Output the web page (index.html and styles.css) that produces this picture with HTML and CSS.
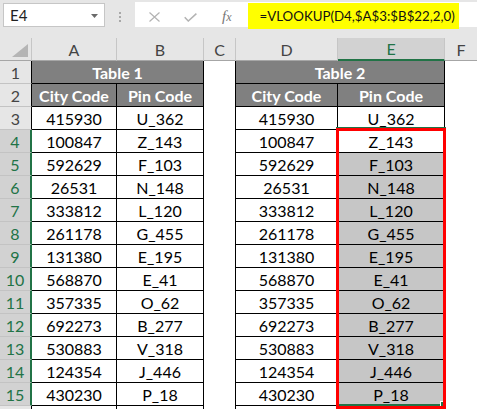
FILE: index.html
```html
<!DOCTYPE html>
<html>
<head>
<meta charset="utf-8">
<link rel="stylesheet" href="styles.css">
</head>
<body>
<div class="app">
  <div class="toolbar">
    <div class="namebox"><span class="name">E4</span><svg class="dd" width="7" height="4" viewBox="0 0 7 4"><polygon points="0,0 7,0 3.5,4" fill="#6a6a6a"/></svg></div>
    <div class="grip"><i></i><i></i><i></i></div>
    <div class="fbox">
      <svg class="ico cancel" width="11" height="10" viewBox="0 0 11 10"><path d="M0.5 0.5 L10.5 9.5 M10.5 0.5 L0.5 9.5" stroke="#b3b3b3" stroke-width="1.2" fill="none"/></svg>
      <svg class="ico enter" width="13" height="9" viewBox="0 0 13 9"><path d="M0.7 4.2 L4.3 8 L12.4 0.6" stroke="#b3b3b3" stroke-width="1.5" fill="none"/></svg>
      <span class="fx"><i>f</i><i class="sx">x</i></span>
      <div class="formula">=VLOOKUP(D4,$A$3:$B$22,2,0)</div>
    </div>
  </div>
  <div class="sheet">
    <div class="ch corner"><svg width="16" height="13" viewBox="0 0 16 13"><polygon points="16,0 16,13 0,13" fill="#b5b5b5"/></svg></div>
    <div class="ch">A</div><div class="ch">B</div><div class="ch">C</div><div class="ch">D</div><div class="ch on">E</div><div class="ch last">F</div>

    <div class="rh">1</div><div class="th span">Table 1</div><div class="gap"></div><div class="th span">Table 2</div><div class="f"></div>
    <div class="rh">2</div><div class="th">City Code</div><div class="th">Pin Code</div><div class="gap"></div><div class="th">City Code</div><div class="th">Pin Code</div><div class="f"></div>
    <div class="rh">3</div><div class="c">415930</div><div class="c">U_362</div><div class="gap"></div><div class="c">415930</div><div class="c">U_362</div><div class="f"></div>
    <div class="rh on">4</div><div class="c">100847</div><div class="c">Z_143</div><div class="gap"></div><div class="c">100847</div><div class="c">Z_143</div><div class="f"></div>
    <div class="rh on">5</div><div class="c">592629</div><div class="c">F_103</div><div class="gap"></div><div class="c">592629</div><div class="c s">F_103</div><div class="f"></div>
    <div class="rh on">6</div><div class="c">26531</div><div class="c">N_148</div><div class="gap"></div><div class="c">26531</div><div class="c s">N_148</div><div class="f"></div>
    <div class="rh on">7</div><div class="c">333812</div><div class="c">L_120</div><div class="gap"></div><div class="c">333812</div><div class="c s">L_120</div><div class="f"></div>
    <div class="rh on">8</div><div class="c">261178</div><div class="c">G_455</div><div class="gap"></div><div class="c">261178</div><div class="c s">G_455</div><div class="f"></div>
    <div class="rh on">9</div><div class="c">131380</div><div class="c">E_195</div><div class="gap"></div><div class="c">131380</div><div class="c s">E_195</div><div class="f"></div>
    <div class="rh on">10</div><div class="c">568870</div><div class="c">E_41</div><div class="gap"></div><div class="c">568870</div><div class="c s">E_41</div><div class="f"></div>
    <div class="rh on">11</div><div class="c">357335</div><div class="c">O_62</div><div class="gap"></div><div class="c">357335</div><div class="c s">O_62</div><div class="f"></div>
    <div class="rh on">12</div><div class="c">692273</div><div class="c">B_277</div><div class="gap"></div><div class="c">692273</div><div class="c s">B_277</div><div class="f"></div>
    <div class="rh on">13</div><div class="c">530883</div><div class="c">V_318</div><div class="gap"></div><div class="c">530883</div><div class="c s">V_318</div><div class="f"></div>
    <div class="rh on">14</div><div class="c">124354</div><div class="c">J_446</div><div class="gap"></div><div class="c">124354</div><div class="c s">J_446</div><div class="f"></div>
    <div class="rh on">15</div><div class="c">430230</div><div class="c">P_18</div><div class="gap"></div><div class="c">430230</div><div class="c s">P_18</div><div class="f"></div>
    <div class="rh"></div><div class="c"></div><div class="c"></div><div class="gap"></div><div class="c"></div><div class="c"></div><div class="f"></div>
  </div>
  <div class="selection"></div>
  <div class="handle"></div>
  <div class="mark"></div>
</div>
</body>
</html>
```
FILE: styles.css
```css
html, body {
  margin: 0;
  padding: 0;
  overflow: hidden;
  background: #fff;
}
.app {
  position: relative;
  width: 477px;
  height: 409px;
  overflow: hidden;
  font-family: Lato, "Open Sans", sans-serif;
}
.toolbar {
  height: 38px;
  background: #e6e6e6;
  display: flex;
  align-items: flex-start;
}
.namebox {
  box-sizing: border-box;
  margin: 3px 0 0 3px;
  width: 102px;
  height: 24px;
  background: #fff;
  border: 1px solid #c6c6c6;
  display: flex;
  align-items: center;
  justify-content: space-between;
  padding: 0 6px 0 6px;
  font-size: 15px;
  color: #222;
}
.namebox .dd {
  margin-top: 1px;
}
.grip {
  margin: 12px 0 0 14px;
  width: 2px;
  display: flex;
  flex-direction: column;
  gap: 2px;
}
.grip i {
  display: block;
  width: 2px;
  height: 2px;
  background: #a8a8a8;
}
.fbox {
  flex: 1;
  margin: 2px 0 0 14px;
  height: 25px;
  background: #fff;
  display: flex;
  align-items: flex-start;
  padding-left: 14px;
}
.ico {
  display: block;
}
.ico.cancel {
  margin-top: 10px;
}
.ico.enter {
  margin: 11px 0 0 24px;
}
.fx {
  margin: 6px 0 0 25px;
  font-family: "Liberation Serif", serif;
  font-size: 15px;
  color: #777;
  line-height: 16px;
  white-space: nowrap;
}
.fx .sx {
  font-size: 12px;
}
.formula {
  margin: 1px 0 0 16px;
  width: 211px;
  height: 26px;
  box-sizing: border-box;
  background: #ffff00;
  padding-left: 12px;
  font-size: 13.3px;
  line-height: 26px;
  color: #111;
  white-space: nowrap;
}
.sheet {
  display: grid;
  grid-template-columns: 32px 85px 87px 32px 102px 107px 1fr;
  grid-auto-rows: 23px;
  font-size: 16px;
}
.sheet > div {
  box-sizing: border-box;
  display: flex;
  align-items: center;
  justify-content: center;
  white-space: nowrap;
}
.ch {
  background: #e6e6e6;
  border-right: 1px solid #c6c6c6;
  border-bottom: 1px solid #a6a6a6;
  color: #444;
}
.ch.on {
  background: #d2d2d2;
  color: #217346;
  border-bottom: 2px solid #217346;
}
.ch.last {
  border-right: none;
}
.ch.corner {
  justify-content: flex-end;
  align-items: flex-end;
  padding: 0 3px 3px 0;
}
.ch.corner svg {
  display: block;
}
.rh {
  background: #e6e6e6;
  border-right: 1px solid #000;
  border-bottom: 1px solid #c3c3c3;
  color: #444;
}
.rh.on {
  background: #d2d2d2;
  color: #217346;
  border-right: 2px solid #217346;
}
.th {
  background: #808080;
  color: #fff;
  font-weight: 700;
  border-right: 1px solid #000;
  border-bottom: 1px solid #000;
}
.th.span {
  grid-column: span 2;
}
.c {
  background: #fff;
  color: #000;
  border-right: 1px solid #000;
  border-bottom: 1px solid #000;
}
.c.s {
  background: #c6c6c6;
}
.gap {
  background: #fff;
  border-right: 1px solid #000;
}
.f {
  background: #fff;
}
.selection {
  position: absolute;
  left: 336px;
  top: 127px;
  width: 110px;
  height: 279px;
  box-sizing: border-box;
  border: 2px solid #217346;
}
.handle {
  position: absolute;
  left: 440px;
  top: 401px;
  width: 6px;
  height: 6px;
  box-sizing: border-box;
  background: #217346;
  border: 1px solid #fff;
}
.mark {
  position: absolute;
  left: 336px;
  top: 128px;
  width: 110px;
  height: 281px;
  box-sizing: border-box;
  border: 3px solid #ff0000;
}
```
